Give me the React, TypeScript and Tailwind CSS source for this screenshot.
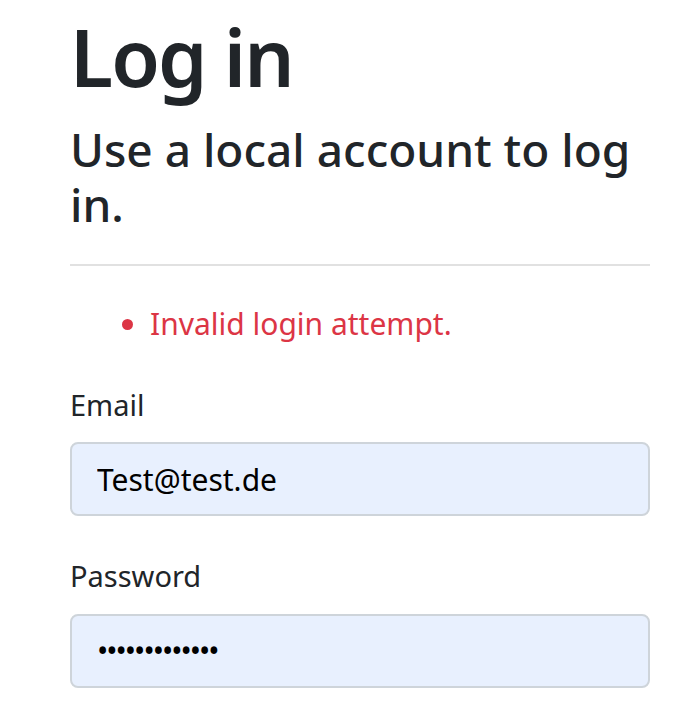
import React from 'react';

const font = { fontFamily: '"Noto Sans", "Open Sans", sans-serif' };

export default function App() {
  return (
    <div className="min-h-screen bg-white text-[#212529]" style={font}>
      <div className="pl-[70px] pr-[25px]">
        <h1 className="mt-[9px] text-[79px] leading-[96px] font-semibold tracking-[-2px]">Log in</h1>
        <h2 className="mt-[17px] text-[46px] leading-[55px] font-medium">
          Use a local account to log in.
        </h2>
        <hr className="mt-[32px] border-t-2 border-[#e1e1e1]" />
        <ul className="mt-[36px] list-disc pl-[80px] text-[30px] leading-[43.5px] text-[#dc3545]">
          <li>Invalid login attempt.</li>
        </ul>
        <form className="mt-[37px]">
          <div>
            <label className="block text-[29px] leading-[43.5px]">Email</label>
            <input
              type="email"
              defaultValue="Test@test.de"
              className="mt-[16px] block h-[74px] w-full rounded-[8px] border-2 border-[#ced4da] bg-[#e8f0fe] pl-[25px] text-[30px] text-black outline-none"
            />
          </div>
          <div className="mt-[38px]">
            <label className="block text-[29px] leading-[43.5px]">Password</label>
            <input
              type="password"
              defaultValue="testpassword!"
              className="mt-[16px] block h-[74px] w-full rounded-[8px] border-2 border-[#ced4da] bg-[#e8f0fe] pl-[25px] text-[30px] tracking-[-2px] text-black outline-none"
            />
          </div>
        </form>
      </div>
    </div>
  );
}
